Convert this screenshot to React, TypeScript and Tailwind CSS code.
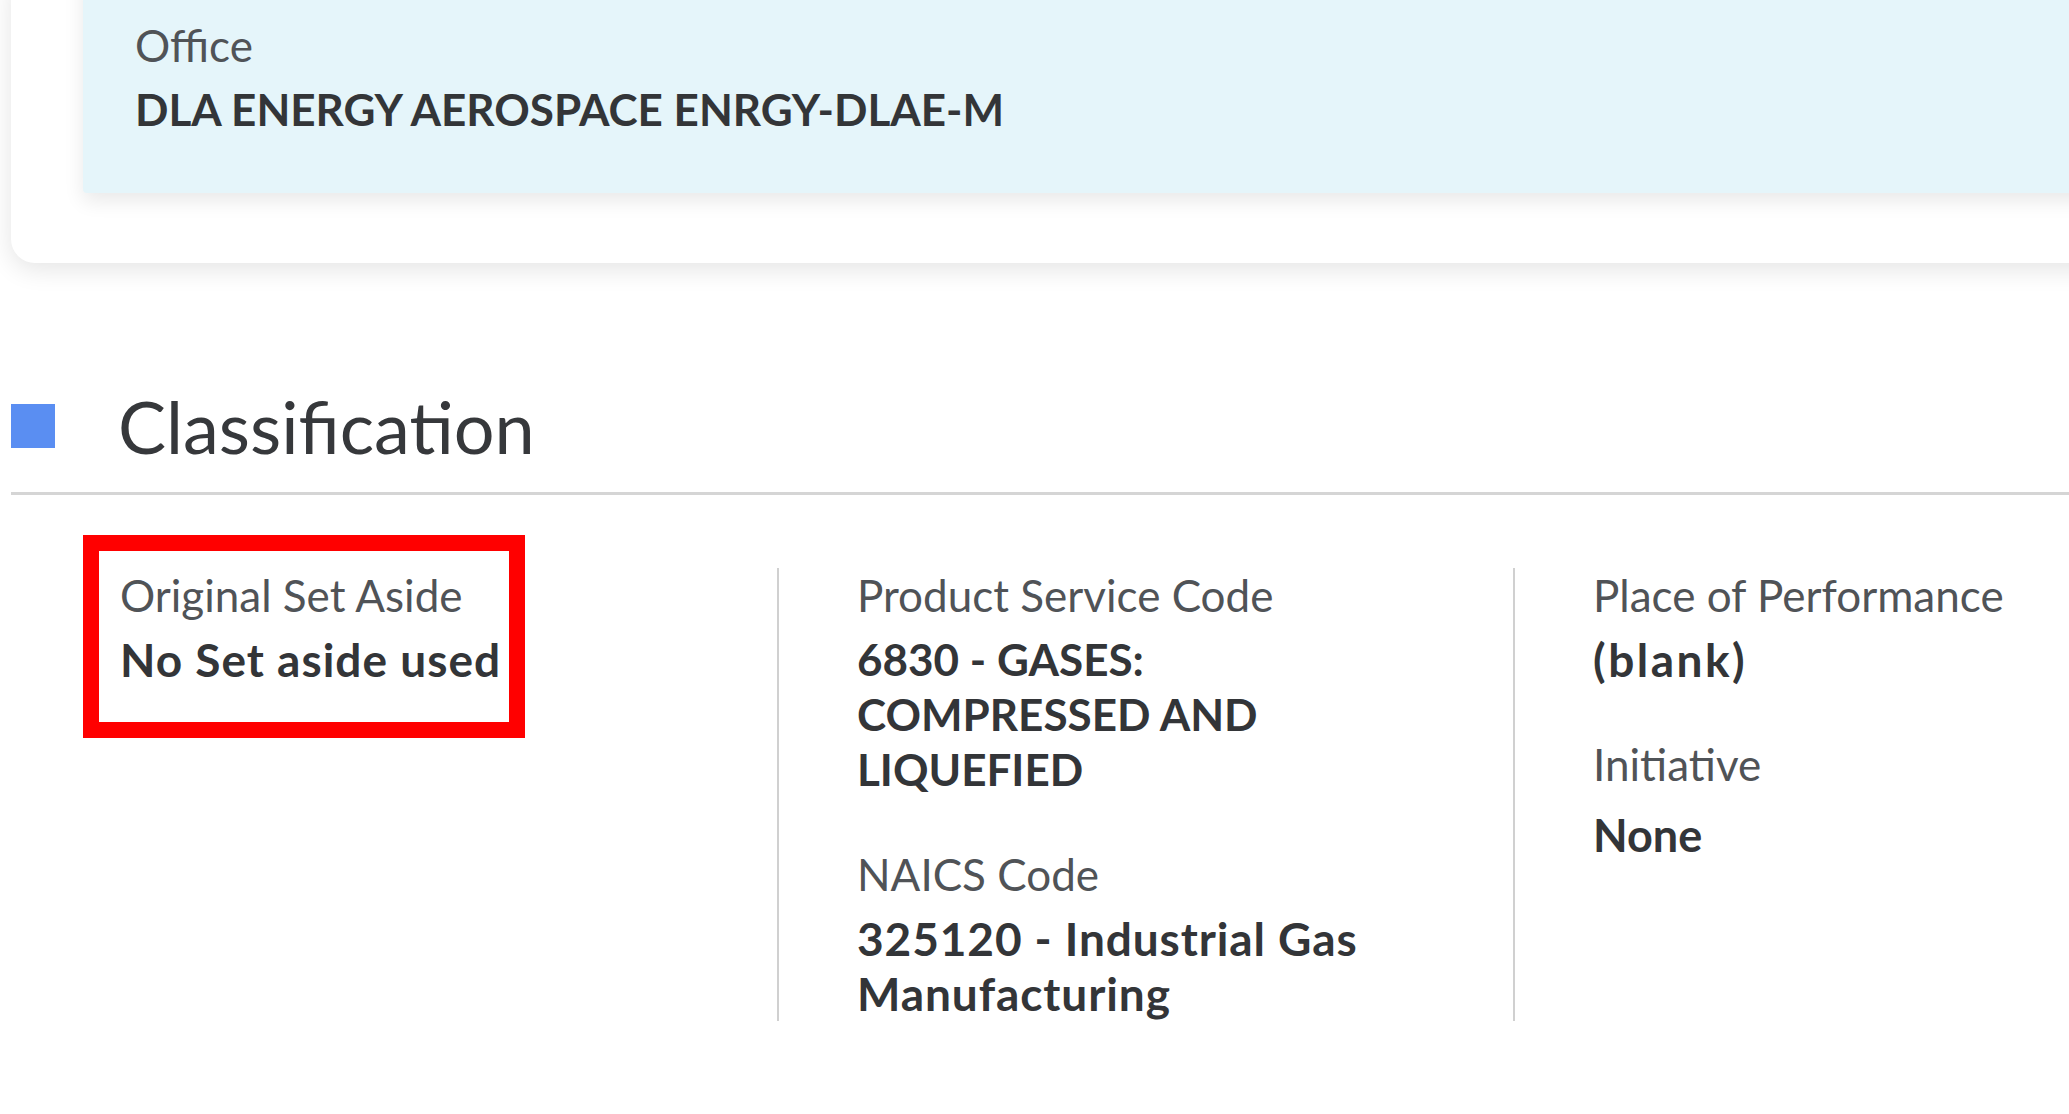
import type { FC, ReactNode } from "react";

const labelCls = "text-[44px] leading-[54px] text-[#505357]";
const valueCls = "mt-[10px] font-bold leading-[55px] text-[#333538]";

const Field: FC<{ label: string; children: ReactNode; className?: string; valueClass?: string }> = ({
  label,
  children,
  className = "",
  valueClass = "text-[44px]",
}) => (
  <div className={className}>
    <div className={labelCls}>{label}</div>
    <div className={`${valueCls} ${valueClass}`}>{children}</div>
  </div>
);

export default function App() {
  return (
    <div className="min-h-screen w-full overflow-hidden bg-white font-['Lato',sans-serif]">
      {/* Office card, top cut off */}
      <div className="-mt-[30px] ml-[11px] -mr-[80px] rounded-[24px] bg-white pb-[70px] pl-[72px] shadow-[0_6px_26px_rgba(0,0,0,0.11)]">
        <div className="rounded-bl-[4px] bg-[#e5f5fa] pt-[48px] pb-[56px] pl-[52px] shadow-[0_8px_20px_rgba(0,0,0,0.09)]">
          <div className={labelCls}>Office</div>
          <div className={`${valueCls} text-[44px]`}>DLA ENERGY AEROSPACE ENRGY-DLAE-M</div>
        </div>
      </div>

      {/* Classification */}
      <section className="mt-[120px]">
        <div className="ml-[11px] flex items-center">
          <span className="h-[44px] w-[44px] bg-[#5a8ef2]" />
          <h2 className="ml-[63px] text-[72px] leading-[86px] text-[#36383b]">Classification</h2>
        </div>
        <div className="mt-[23px] ml-[11px] h-[3px] bg-[#d5d5d5]" />

        <div className="mt-[73px] ml-[40px] flex">
          <div className="relative w-[737px] shrink-0 px-[80px]">
            <Field label="Original Set Aside" valueClass="text-[46px] tracking-[1px]">
              No Set aside used
            </Field>
            <div className="pointer-events-none absolute top-[-33px] left-[43px] h-[203px] w-[442px] border-[16px] border-[#ff0000]" />
          </div>

          <div className="w-[736px] shrink-0 border-l-2 border-[#d0d0d0] pl-[78px] pr-[80px]">
            <Field label="Product Service Code">6830 - GASES: COMPRESSED AND LIQUEFIED</Field>
            <Field label="NAICS Code" className="mt-[50px]" valueClass="text-[46px] tracking-[0.9px]">
              325120 - Industrial Gas Manufacturing
            </Field>
          </div>

          <div className="w-[736px] shrink-0 border-l-2 border-[#d0d0d0] pl-[78px] pr-[80px]">
            <Field label="Place of Performance" valueClass="text-[46px] tracking-[2.5px]">
              (blank)
            </Field>
            <Field label="Initiative" className="mt-[50px]" valueClass="mt-[17px] text-[45px]">
              None
            </Field>
          </div>
        </div>
      </section>
    </div>
  );
}
